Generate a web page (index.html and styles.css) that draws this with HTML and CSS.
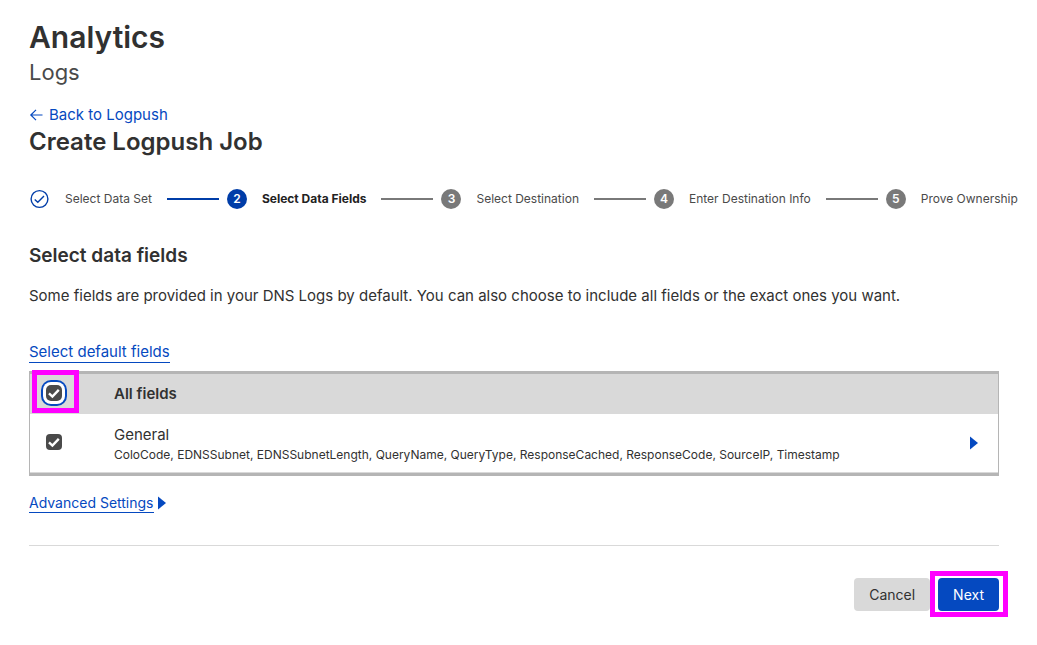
FILE: index.html
```html
<!DOCTYPE html>
<html lang="en">
<head>
<meta charset="utf-8">
<title>Create Logpush Job</title>
<link rel="stylesheet" href="styles.css">
</head>
<body>
<main class="page">
  <header class="page-header">
    <h1 class="page-title">Analytics</h1>
    <p class="page-subtitle">Logs</p>
  </header>
  <a class="back-link" href="#">
    <svg class="back-icon" viewBox="0 0 14 14" aria-hidden="true"><path d="M13 7H1.5M6.5 1.8 1.3 7l5.2 5.2" fill="none" stroke="currentColor" stroke-width="1.2"/></svg>
    <span>Back to Logpush</span>
  </a>
  <h2 class="job-title">Create Logpush Job</h2>

  <ol class="steps">
    <li class="step">
      <svg class="step-done" viewBox="0 0 20 20" aria-hidden="true"><circle cx="10" cy="10" r="8.4" fill="none" stroke="currentColor" stroke-width="1.4"/><path d="m5.2 10.4 3.1 2.8 6.2-6.3" fill="none" stroke="currentColor" stroke-width="1.4"/></svg>
      <span>Select Data Set</span>
    </li>
    <li class="step step-current" aria-current="step"><span class="step-number">2</span><span>Select Data Fields</span></li>
    <li class="step"><span class="step-number">3</span><span>Select Destination</span></li>
    <li class="step"><span class="step-number">4</span><span>Enter Destination Info</span></li>
    <li class="step"><span class="step-number">5</span><span>Prove Ownership</span></li>
  </ol>

  <section>
    <h3 class="section-title">Select data fields</h3>
    <p class="section-text">Some fields are provided in your DNS Logs by default. You can also choose to include all fields or the exact ones you want.</p>
    <a class="text-link" href="#">Select default fields</a>
    <table class="fields">
      <thead>
        <tr>
          <th class="check-cell"><span class="check-wrap"><input class="check check-focus" type="checkbox" id="all" checked><span class="highlight highlight-check"></span></span></th>
          <th class="name-cell"><label for="all">All fields</label></th>
          <th class="toggle-cell"></th>
        </tr>
      </thead>
      <tbody>
        <tr>
          <td class="check-cell"><span class="check-wrap"><input class="check" type="checkbox" id="general" checked></span></td>
          <td class="name-cell"><label class="group-name" for="general">General</label><span class="group-fields">ColoCode, EDNSSubnet, EDNSSubnetLength, QueryName, QueryType, ResponseCached, ResponseCode, SourceIP, Timestamp</span></td>
          <td class="toggle-cell"><button class="toggle" type="button" aria-label="Expand General"><svg class="caret" viewBox="0 0 8 14" aria-hidden="true"><path d="M0 0.5 8 7 0 13.5z" fill="currentColor"/></svg></button></td>
        </tr>
      </tbody>
    </table>
    <div class="advanced">
      <a class="text-link text-link-small" href="#">Advanced Settings</a>
      <svg class="caret" viewBox="0 0 8 14" aria-hidden="true"><path d="M0 0.5 8 7 0 13.5z" fill="currentColor"/></svg>
    </div>
  </section>

  <footer class="actions">
    <button class="button" type="button">Cancel</button>
    <span class="next-wrap"><button class="button button-primary" type="button">Next</button><span class="highlight highlight-next"></span></span>
  </footer>
</main>
</body>
</html>
```
FILE: styles.css
```css
* { box-sizing: border-box; }
body {
  margin: 0;
  background: #fff;
  color: #313131;
  font-family: Inter, "Liberation Sans", sans-serif;
  font-size: 15px;
}
h1, h2, h3, p, ol { margin: 0; padding: 0; }
.page { padding: 17px 38px 28px 29px; }
.page-title { font-size: 30px; line-height: 40px; font-weight: 600; }
.page-subtitle { font-size: 22px; line-height: 30px; color: #4a4a4a; }
.back-link {
  display: flex;
  align-items: center;
  gap: 5px;
  width: max-content;
  margin-top: 18px;
  line-height: 20px;
  color: #0549c0;
  text-decoration: none;
}
.back-icon { width: 15px; height: 14px; }
.job-title { margin-top: 1px; font-size: 24px; line-height: 32px; font-weight: 600; }

.steps { display: flex; gap: 15px; margin-top: 30px; list-style: none; }
.step {
  display: flex;
  align-items: center;
  flex: none;
  gap: 15px;
  font-size: 12px;
  line-height: 22px;
  color: #4a4a4a;
}
.step + .step::before {
  content: "";
  width: 52px;
  height: 2px;
  margin-right: -7px;
  background: #797979;
}
.step-done { width: 21px; height: 20px; color: #003da8; }
.step-number {
  width: 20px;
  height: 20px;
  border-radius: 50%;
  background: #797979;
  color: #fff;
  font-weight: 600;
  line-height: 20px;
  text-align: center;
}
.step-current { font-weight: 700; color: #222; }
.step-current .step-number, .step.step-current::before { background: #003da8; }

.section-title { margin-top: 33px; font-size: 19px; line-height: 26px; font-weight: 600; }
.section-text { margin-top: 15px; line-height: 24px; }
.text-link {
  display: block;
  width: max-content;
  margin-top: 33px;
  border-bottom: 1px solid;
  line-height: 21px;
  color: #0549c0;
  text-decoration: none;
}
.fields {
  width: 100%;
  margin-top: 8px;
  border: solid #b5b5b5;
  border-width: 3px 1px;
  border-spacing: 0;
  text-align: left;
}
.fields th, .fields td { padding: 0; }
.fields th { height: 40px; background: #d9d9d9; font-weight: 600; }
.fields td { height: 59px; border-bottom: 1px solid #d9d9d9; }
.fields td.name-cell { padding-top: 3px; }
.check-cell { width: 84px; }
.name-cell label { display: block; line-height: 20px; }
.group-fields { display: block; font-size: 12px; line-height: 20px; }
.check-wrap { position: relative; display: block; width: 16px; height: 16px; margin: 0 0 2px 16px; }
.check {
  appearance: none;
  display: block;
  width: 16px;
  height: 16px;
  margin: 0;
  border-radius: 4px;
  background: #4a4a4a url("data:image/svg+xml,%3Csvg xmlns='http://www.w3.org/2000/svg' viewBox='0 0 16 16'%3E%3Cpath d='m3 8.3 3.4 3.2 6.4-6.7' fill='none' stroke='white' stroke-width='2.4'/%3E%3C/svg%3E");
}
.check-focus {
  border-radius: 5px;
  box-shadow: 0 0 0 3px #fff, 0 0 0 5px #0549c0;
}
.highlight { position: absolute; border: 5px solid #f0f; pointer-events: none; }
.highlight-check { inset: -15px -17px -12px -14px; }
.highlight-next { inset: -7px -9px -6px -8px; }
.toggle-cell { width: 36px; }
.toggle { display: block; padding: 4px 8px; border: 0; background: none; color: #0549c0; }
.caret { display: block; width: 8px; height: 14px; }
.advanced { display: flex; align-items: center; gap: 4px; margin-top: 17px; color: #0549c0; }
.text-link-small { margin-top: 0; font-size: 14px; line-height: 19px; }

.actions {
  display: flex;
  justify-content: flex-end;
  gap: 8px;
  margin-top: 32px;
  padding-top: 32px;
  border-top: 1px solid #d9d9d9;
}
.next-wrap { position: relative; }
.button {
  display: block;
  height: 33px;
  padding: 0 15px;
  border: 0;
  border-radius: 4px;
  background: #d9d9d9;
  color: #313131;
  font-family: inherit;
  font-size: 14px;
}
.button-primary { background: #0549c0; color: #fff; }
```
